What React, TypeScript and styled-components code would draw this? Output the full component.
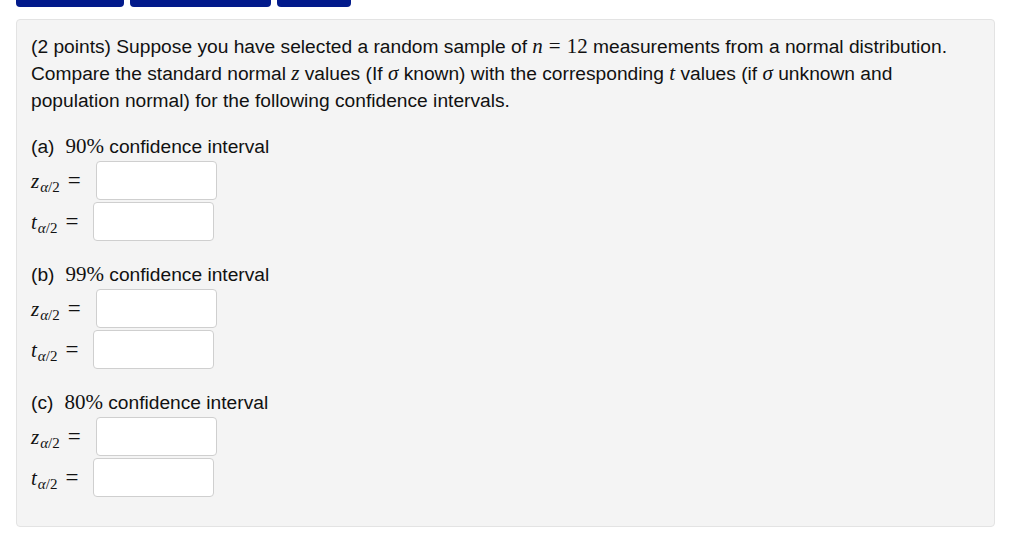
import styled, { createGlobalStyle } from 'styled-components'

const GlobalStyle = createGlobalStyle`
  html, body {
    margin: 0;
    padding: 0;
    background: #ffffff;
  }
  body {
    font-family: "Liberation Sans", Arial, Helvetica, sans-serif;
    color: #111111;
  }
`

const Page = styled.div`
  padding: 0 0 0 16px;
`

const TabBar = styled.div`
  display: flex;
  gap: 6px;
  height: 7px;
`

const Tab = styled.div<{ $w: number }>`
  width: ${(p) => p.$w}px;
  height: 7px;
  background: #021a8b;
  border-radius: 0 0 4px 4px;
`

const Panel = styled.div`
  margin-top: 12px;
  width: 979px;
  height: 508px;
  box-sizing: border-box;
  background: #f4f4f4;
  border: 1px solid #e3e3e3;
  border-radius: 4px;
  padding: 13px 14px 0 14px;
  font-size: 19.2px;
  line-height: 27px;
`

const Intro = styled.p`
  margin: 0;
`

const Math = styled.span`
  font-family: "Liberation Serif", "Times New Roman", serif;
  font-size: 21px;
`

const MathVar = styled(Math)`
  font-style: italic;
`

const MathOp = styled(Math)`
  margin: 0 6px;
`

const Section = styled.div`
  margin-top: 19px;
`

const Heading = styled.div`
  display: flex;
  align-items: baseline;
  gap: 11px;
`

const Row = styled.div`
  display: flex;
  align-items: center;
  height: 41px;
`

const Label = styled.span`
  display: inline-flex;
  align-items: baseline;
  font-family: "Liberation Serif", "Times New Roman", serif;
  font-size: 21px;
  line-height: 1;
`

const Sub = styled.span`
  font-size: 15px;
  position: relative;
  top: 4px;
  margin-left: 1px;
`

const Greek = styled.span`
  font-style: italic;
`

const Equals = styled.span`
  font-size: 23px;
  margin: 0 15px 0 8px;
`

const AnswerBox = styled.input`
  width: 121px;
  height: 39px;
  box-sizing: border-box;
  border: 1px solid #cfcfcf;
  border-radius: 4px;
  background: #ffffff;
  outline: none;
  font-size: 16px;
  padding: 0 8px;
`

const parts = [
  { tag: '(a)', pct: '90%' },
  { tag: '(b)', pct: '99%' },
  { tag: '(c)', pct: '80%' },
]

function AnswerRow({ sym }: { sym: string }) {
  return (
    <Row>
      <Label>
        <i>{sym}</i>
        <Sub>
          <Greek>α</Greek>/2
        </Sub>
        <Equals>=</Equals>
      </Label>
      <AnswerBox type="text" />
    </Row>
  )
}

export default function App() {
  return (
    <>
      <GlobalStyle />
      <Page>
        <TabBar>
          <Tab $w={108} />
          <Tab $w={141} />
          <Tab $w={74} />
        </TabBar>
        <Panel>
          <Intro>
            (2 points) Suppose you have selected a random sample of <MathVar>n</MathVar>
            <MathOp>=</MathOp>
            <Math>12</Math> measurements from a normal distribution.
            <br />
            Compare the standard normal <MathVar>z</MathVar> values (If <MathVar>σ</MathVar> known)
            with the corresponding <MathVar>t</MathVar> values (if <MathVar>σ</MathVar> unknown and
            <br />
            population normal) for the following confidence intervals.
          </Intro>
          {parts.map((p) => (
            <Section key={p.tag}>
              <Heading>
                <span>{p.tag}</span>
                <span>
                  <Math>{p.pct}</Math> confidence interval
                </span>
              </Heading>
              <AnswerRow sym="z" />
              <AnswerRow sym="t" />
            </Section>
          ))}
        </Panel>
      </Page>
    </>
  )
}
